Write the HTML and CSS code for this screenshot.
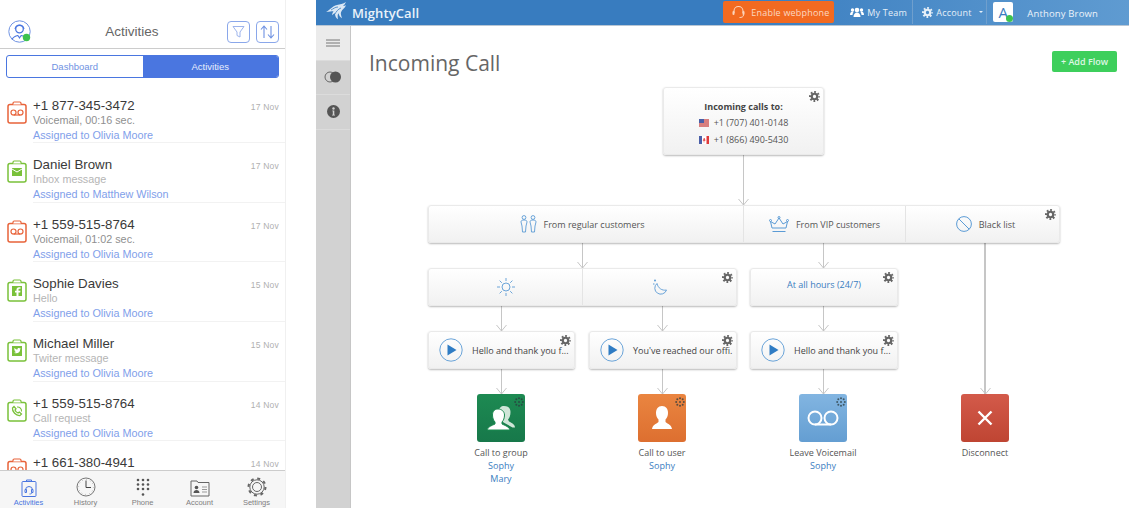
FILE: index.html
```html
<!DOCTYPE html>
<html lang="en">
<head>
<meta charset="utf-8">
<title>Incoming Call</title>
<link rel="stylesheet" href="styles.css">
</head>
<body>
<svg class="defs" aria-hidden="true">
  <defs>
    <symbol id="gear" viewBox="0 0 12 12">
      <circle cx="6" cy="6" r="3" fill="none" stroke="currentColor" stroke-width="2.4"/>
      <circle cx="6" cy="6" r="4.9" fill="none" stroke="currentColor" stroke-width="2.2" stroke-dasharray="1.95 1.9" stroke-dashoffset=".97"/>
    </symbol>
    <symbol id="clip" viewBox="0 0 20 23">
      <rect x="1" y="3.5" width="18" height="18.5" rx="2" fill="none" stroke="currentColor" stroke-width="1.5"/>
      <path d="M6 3.5V2.2C6 1.5 6.5 1 7.2 1h5.6c.7 0 1.2.5 1.2 1.2v1.3" fill="#fff" stroke="currentColor" stroke-width="1.2"/>
    </symbol>
    <symbol id="vm" viewBox="0 0 20 10">
      <circle cx="5" cy="5" r="3.6" fill="none" stroke="currentColor" stroke-width="1.7"/>
      <circle cx="15" cy="5" r="3.6" fill="none" stroke="currentColor" stroke-width="1.7"/>
      <path d="M5 8.6h10" stroke="currentColor" stroke-width="1.7"/>
    </symbol>
    <symbol id="play" viewBox="0 0 24 24">
      <circle cx="12" cy="12" r="11.2" fill="none" stroke="#5b9bd5" stroke-width=".9"/>
      <path d="M8.5 6.5 17.5 12l-9 5.500z" fill="#2f7cc4"/>
    </symbol>
    <symbol id="dots" viewBox="0 0 10 10">
      <g fill="currentColor">
        <circle cx="5" cy="1.200" r="1"/><circle cx="5" cy="8.800" r="1"/><circle cx="1.200" cy="5" r="1"/><circle cx="8.800" cy="5" r="1"/>
        <circle cx="2.300" cy="2.300" r="1"/><circle cx="7.700" cy="2.300" r="1"/><circle cx="2.300" cy="7.700" r="1"/><circle cx="7.700" cy="7.700" r="1"/><circle cx="5" cy="5" r="1"/>
      </g>
    </symbol>
  </defs>
</svg>

<section class="phone">
  <header class="ph-head">
    <svg class="agent" width="24" height="24" viewBox="0 0 24 24">
      <circle cx="11.500" cy="11.500" r="10.700" fill="#fff" stroke="#6f92e2" stroke-width="1"/>
      <circle cx="11.500" cy="9" r="3.800" fill="none" stroke="#4a76e0" stroke-width="1.300"/>
      <path d="M7 9a4.600 4.600 0 0 1 9 0M10 15.500c-3 .5-5 2-6 4M13 15.500c3 .5 5 2 6 4M10 15.500l1.500 2.500 1.500-2.500" fill="none" stroke="#4a76e0" stroke-width="1.100"/>
      <circle cx="18.500" cy="17.500" r="3.700" fill="#3dc24f"/>
    </svg>
    <h1 class="ph-title">Activities</h1>
    <div class="ph-actions">
      <span class="ph-btn"><svg width="13" height="14" viewBox="0 0 13 14"><path d="M1 1.500h11L8 7v5l-3-1.500V7z" fill="none" stroke="#9db4ec" stroke-width="1"/></svg></span>
      <span class="ph-btn"><svg width="15" height="14" viewBox="0 0 15 14"><path d="M4 13V1M1 4.500 4 1l3 3.500M11 1v12M8 9.500 11 13l3-3.500" fill="none" stroke="#6f92e2" stroke-width="1.100"/></svg></span>
    </div>
  </header>
  <div class="seg">
    <span class="seg-item">Dashboard</span>
    <span class="seg-item seg-on">Activities</span>
  </div>
  <ul class="list">
    <li class="row">
      <span class="ri red"><svg class="ri-clip"><use href="#clip"/></svg><svg class="ri-in ri-vm"><use href="#vm"/></svg></span>
      <div class="rb"><div class="rh"><span class="name">+1 877-345-3472</span><span class="date">17 Nov</span></div><div class="sub">Voicemail, 00:16 sec.</div><div class="asg">Assigned to Olivia Moore</div></div>
    </li>
    <li class="row">
      <span class="ri green"><svg class="ri-clip"><use href="#clip"/></svg><svg class="ri-in" viewBox="0 0 12 12"><path d="M1 2h10v8H1z" fill="currentColor"/><path d="M1 3l5 3 5-3" fill="none" stroke="#fff" stroke-width="1"/></svg></span>
      <div class="rb"><div class="rh"><span class="name">Daniel Brown</span><span class="date">17 Nov</span></div><div class="sub sub-l">Inbox message</div><div class="asg">Assigned to Matthew Wilson</div></div>
    </li>
    <li class="row">
      <span class="ri red"><svg class="ri-clip"><use href="#clip"/></svg><svg class="ri-in ri-vm"><use href="#vm"/></svg></span>
      <div class="rb"><div class="rh"><span class="name">+1 559-515-8764</span><span class="date">17 Nov</span></div><div class="sub">Voicemail, 01:02 sec.</div><div class="asg">Assigned to Olivia Moore</div></div>
    </li>
    <li class="row">
      <span class="ri green"><svg class="ri-clip"><use href="#clip"/></svg><svg class="ri-in" viewBox="0 0 12 12"><path d="M1 1h10v10H7.500V7.500h1.700L9.500 5.700H7.500V4.700c0-.6.200-.9.900-.9h1.100V2.200H8c-1.700 0-2.500 1-2.500 2.400v1.100H4v1.800h1.500V11H1z" fill="currentColor"/></svg></span>
      <div class="rb"><div class="rh"><span class="name">Sophie Davies</span><span class="date">15 Nov</span></div><div class="sub sub-l">Hello</div><div class="asg">Assigned to Olivia Moore</div></div>
    </li>
    <li class="row">
      <span class="ri green"><svg class="ri-clip"><use href="#clip"/></svg><svg class="ri-in" viewBox="0 0 12 12"><path d="M1 1h10v10H1z" fill="currentColor"/><path d="M9.800 3.500c-.4.200-.7.300-1 .3.400-.2.600-.5.700-.9-.3.200-.7.300-1 .4-.7-.8-2.300-.3-2 1.100-1.300 0-2.400-.7-3-1.500-.4.700-.2 1.500.4 1.900-.3 0-.5-.1-.7-.2 0 .8.500 1.300 1.200 1.500-.2.100-.4.100-.7 0 .2.600.7 1 1.400 1-.6.500-1.400.7-2.200.6 2.900 1.700 6.400 0 6.300-3.500.2-.1.500-.4.600-.7z" fill="#fff"/></svg></span>
      <div class="rb"><div class="rh"><span class="name">Michael Miller</span><span class="date">15 Nov</span></div><div class="sub sub-l">Twiter message</div><div class="asg">Assigned to Olivia Moore</div></div>
    </li>
    <li class="row">
      <span class="ri green"><svg class="ri-clip"><use href="#clip"/></svg><svg class="ri-in" viewBox="0 0 12 12"><path d="M3 1.500 1.500 3c-.5 3.500 3.500 8 7.500 7.500l1.500-1.500-2.200-2-1.300 1C5.500 7.500 4.500 6.300 4 5l1-1.300z" fill="none" stroke="currentColor" stroke-width="1.300"/><path d="M6 2a4 4 0 0 1 4.500 4.500" fill="none" stroke="currentColor" stroke-width="1.100"/></svg></span>
      <div class="rb"><div class="rh"><span class="name">+1 559-515-8764</span><span class="date">14 Nov</span></div><div class="sub sub-l">Call request</div><div class="asg">Assigned to Olivia Moore</div></div>
    </li>
    <li class="row">
      <span class="ri red"><svg class="ri-clip"><use href="#clip"/></svg><svg class="ri-in ri-vm"><use href="#vm"/></svg></span>
      <div class="rb"><div class="rh"><span class="name">+1 661-380-4941</span><span class="date">14 Nov</span></div><div class="sub">Voicemail, 00:21 sec.</div><div class="asg">Assigned to Olivia Moore</div></div>
    </li>
  </ul>
  <nav class="tabs">
    <a class="tab tab-on"><svg width="18" height="18" viewBox="0 0 18 18"><rect x="2" y="2.500" width="14" height="15" rx="1" fill="none" stroke="currentColor"/><path d="M6.500 2.500V1h5v1.500" fill="none" stroke="currentColor"/><path d="M5.500 11a3.500 3.500 0 0 1 7 0M5 10.500v3h1.500v-3zM11.500 10.500v3H13v-3zM12 13.500c0 1-1 1.500-2.500 1.500" fill="none" stroke="currentColor"/></svg><span>Activities</span></a>
    <a class="tab"><svg width="20" height="20" viewBox="0 0 20 20"><circle cx="10" cy="10" r="9" fill="none" stroke="#666" stroke-width=".9"/><circle cx="10" cy="10" r="7.400" fill="none" stroke="#999" stroke-width="1" stroke-dasharray=".6 3.270"/><path d="M10 3.500V10.500H15" fill="none" stroke="#444" stroke-width="1"/></svg><span>History</span></a>
    <a class="tab"><svg width="14" height="19" viewBox="0 0 14 19"><g fill="#555"><circle cx="2" cy="2" r="1.300"/><circle cx="7" cy="2" r="1.300"/><circle cx="12" cy="2" r="1.300"/><circle cx="2" cy="6.500" r="1.300"/><circle cx="7" cy="6.500" r="1.300"/><circle cx="12" cy="6.500" r="1.300"/><circle cx="2" cy="11" r="1.300"/><circle cx="7" cy="11" r="1.300"/><circle cx="12" cy="11" r="1.300"/><circle cx="7" cy="16.500" r="1.300"/></g></svg><span>Phone</span></a>
    <a class="tab"><svg width="20" height="17" viewBox="0 0 20 17"><path d="M1 16V1h6l1 1.500h11V16z" fill="none" stroke="#666"/><circle cx="6.500" cy="7.500" r="1.800" fill="#555"/><path d="M3.500 13c0-4 6-4 6 0z" fill="#555"/><path d="M12 7h5M12 9.500h5M12 12h5" stroke="#999"/></svg><span>Account</span></a>
    <a class="tab"><svg width="20" height="20" viewBox="0 0 20 20"><circle cx="10" cy="10" r="4.500" fill="none" stroke="#666"/><circle cx="10" cy="10" r="7.200" fill="none" stroke="#666"/><circle cx="10" cy="10" r="8.500" fill="none" stroke="#666" stroke-width="2" stroke-dasharray="3 3.670"/></svg><span>Settings</span></a>
  </nav>
</section>

<section class="app">
  <header class="top">
    <div class="brand">
      <svg class="logo" width="24" height="24" viewBox="0 0 24 24"><path d="M1 11c4-2 6-6 11-7 3-.8 6-1 9-3-1 2-2 3-3 4 1 0 2-.3 3-.8-1 3-4 4-5 7-.6 2 .5 4 1 6-2-1-3-3-3.500-5-1 1-1 3-.5 6-2-1-3-3-3-6-1 0-2 1-3 2 0-2 1-3 1.500-4-2 0-4 .5-7.500.8z" fill="#dbe8f5"/><path d="M6 9c2-1 4-3 7-3M10 13c1-2 3-5 6-6" stroke="#3a7dbf" stroke-width=".8" fill="none"/></svg>
      <span class="brand-name">MightyCall</span>
    </div>
    <div class="top-right">
      <a class="webphone"><svg width="15" height="14" viewBox="0 0 15 14"><path d="M3 8V6a4.500 4.500 0 0 1 9 0v2" fill="none" stroke="#fbd5bd" stroke-width="1.100"/><rect x="1.500" y="6" width="2" height="4" rx="1" fill="#fbd5bd"/><rect x="11.500" y="6" width="2" height="4" rx="1" fill="#fbd5bd"/><path d="M12.500 10c0 2-2 2.500-4 2.500" fill="none" stroke="#fbd5bd"/></svg>Enable webphone</a>
      <a class="top-link top-team"><svg width="14" height="11" viewBox="0 0 14 11"><g fill="#fff"><circle cx="7" cy="3" r="2.300"/><circle cx="2.500" cy="3" r="1.700"/><circle cx="11.500" cy="3" r="1.700"/><path d="M3.500 10c0-6 7-6 7 0z"/><path d="M0 8c0-3.500 3-4 3.500-3C2.800 6 2.500 7 2.500 8zM14 8c0-3.500-3-4-3.500-3 .7 1 1 2 1 3z"/></g></svg>My Team</a>
      <a class="top-link top-acc"><svg width="11" height="11"><use href="#gear"/></svg>Account<i class="caret"></i></a>
      <span class="user-ava">A<i class="user-dot"></i></span>
      <span class="user-name">Anthony Brown</span>
    </div>
  </header>
  <div class="app-body">
    <aside class="side">
      <span class="side-item side-on"><svg width="14" height="8" viewBox="0 0 14 8"><path d="M0 1h14M0 4h14M0 7h14" stroke="#777" stroke-width="1"/></svg></span>
      <span class="side-item"><svg width="18" height="12" viewBox="0 0 18 12"><circle cx="6" cy="6" r="5" fill="none" stroke="#666"/><circle cx="11.500" cy="6" r="5.500" fill="#555"/></svg></span>
      <span class="side-item"><svg width="13" height="13" viewBox="0 0 13 13"><circle cx="6.500" cy="6.500" r="6.500" fill="#555"/><circle cx="6.500" cy="3.500" r="1.200" fill="#d2d2d2"/><path d="M5.300 5.500h2v4.300h.7v.8H5v-.8h.8V6.300h-.5z" fill="#d2d2d2"/></svg></span>
    </aside>
    <main class="content">
      <div class="page-head">
        <h2 class="page-title">Incoming Call</h2>
        <a class="add-flow">+ Add Flow</a>
      </div>
      <div class="canvas">
        <svg class="wires" width="778" height="402" viewBox="0 0 778 402" aria-hidden="true">
          <g fill="none" stroke="#c6c6c6" stroke-width="1">
            <path d="M392.500 75v50M387.500 119l5 6 5-6"/>
            <path d="M231.500 163v25M226.500 182l5 6 5-6"/>
            <path d="M472.500 163v25M467.500 182l5 6 5-6"/>
            <path d="M150.500 226v25M145.500 245l5 6 5-6"/>
            <path d="M311.500 226v25M306.500 245l5 6 5-6"/>
            <path d="M472.500 226v25M467.500 245l5 6 5-6"/>
            <path d="M150.500 289v25M145.500 308l5 6 5-6"/>
            <path d="M311.500 289v25M306.500 308l5 6 5-6"/>
            <path d="M472.500 289v25M467.500 308l5 6 5-6"/>
            <path d="M634 163v151" stroke-width="2"/>
            <path d="M629.500 308l5 6 5-6"/>
          </g>
        </svg>

        <div class="box n-in">
          <svg class="cog"><use href="#gear"/></svg>
          <div class="in-title">Incoming calls to:</div>
          <div class="in-num"><svg class="flag" viewBox="0 0 10 8"><path d="M0 0h10v8H0z" fill="#e8b4b4"/><path d="M0 1h10M0 3h10M0 5h10M0 7h10" stroke="#c84a4a"/><path d="M0 0h5v4H0z" fill="#4a5fa8"/></svg>+1 (707) 401-0148</div>
          <div class="in-num"><svg class="flag" viewBox="0 0 10 8"><path d="M0 0h10v8H0z" fill="#fff"/><path d="M0 0h3v8H0z" fill="#4a5fa8"/><path d="M7.500 0H10v8H7.500z" fill="#e03a3a"/><path d="M5.200 2 4.200 4.500h2zM5 4v2.500" fill="#e03a3a" stroke="#e03a3a" stroke-width=".5"/></svg>+1 (866) 490-5430</div>
        </div>

        <div class="box n-cust">
          <svg class="cog"><use href="#gear"/></svg>
          <div class="cell cell-a">
            <svg width="17" height="18" viewBox="0 0 17 18"><g fill="none" stroke="#5b9bd5" stroke-width=".9"><circle cx="4" cy="2.500" r="1.900"/><circle cx="13" cy="2.500" r="1.900"/><path d="M1 7c0-1.500 1-2 3-2s3 .5 3 2l-1 4-.5 6h-3L2 11zM10 7c0-1.500 1-2 3-2s3 .5 3 2l-1 4-.5 6h-3L11 11z"/></g></svg>
            <span>From regular customers</span>
          </div>
          <div class="cell">
            <svg width="20" height="17" viewBox="0 0 20 17"><g fill="none" stroke="#5b9bd5" stroke-width="1"><path d="M3 12 1.500 5.500 6 8l4-6 4 6 4.500-2.500L17 12zM3.500 15.500h13"/><circle cx="1.500" cy="4.500" r="1"/><circle cx="10" cy="1.500" r="1"/><circle cx="18.500" cy="4.500" r="1"/></g></svg>
            <span>From VIP customers</span>
          </div>
          <div class="cell cell-c">
            <svg width="16" height="16" viewBox="0 0 16 16"><g fill="none" stroke="#5b9bd5" stroke-width="1"><circle cx="8" cy="8" r="7.400"/><path d="M2.800 2.800l10.400 10.400"/></g></svg>
            <span>Black list</span>
          </div>
        </div>

        <div class="box n-time">
          <svg class="cog"><use href="#gear"/></svg>
          <div class="cell cell-b">
            <svg width="18" height="18" viewBox="0 0 18 18"><g fill="none" stroke="#5b9bd5" stroke-width=".9"><circle cx="9" cy="9" r="4"/><path d="M9 0v3M9 15v3M0 9h3M15 9h3M2.600 2.600l2.200 2.200M13.200 13.200l2.200 2.200M2.600 15.400l2.200-2.200M13.200 4.800l2.200-2.200"/></g></svg>
          </div>
          <div class="cell">
            <svg width="16" height="16" viewBox="0 0 16 16"><path d="M5 4.500a6 6 0 1 0 9.500 6.500C10 12 6 9 5 4.500z" fill="none" stroke="#5b9bd5" stroke-width=".9"/><circle cx="3" cy="1.500" r="1" fill="#5b9bd5"/><path d="M1 5h1.500" stroke="#5b9bd5"/></svg>
          </div>
        </div>

        <div class="box n-hours">
          <svg class="cog"><use href="#gear"/></svg>
          <div class="cell cell-up"><span class="hours">At all hours (24/7)</span></div>
        </div>

        <div class="box msg n-m1"><svg class="cog"><use href="#gear"/></svg><svg class="pl"><use href="#play"/></svg><span>Hello and thank you f...</span></div>
        <div class="box msg n-m2"><svg class="cog"><use href="#gear"/></svg><svg class="pl"><use href="#play"/></svg><span>You've reached our offi.</span></div>
        <div class="box msg n-m3"><svg class="cog"><use href="#gear"/></svg><svg class="pl"><use href="#play"/></svg><span>Hello and thank you f...</span></div>

        <div class="act n-a1">
          <div class="tile t-green"><svg class="tdots"><use href="#dots"/></svg>
            <svg width="28" height="26" viewBox="0 0 28 26"><path d="M17 1c-3 0-5 2-5 5 0 3 1 5 2.500 6.500 0 3 .5 4 3 5.500l8 4.500H28c0-3-3-4.500-6-6l-1-2c1.500-1.500 2.500-4 2.500-7.500C23.500 3 21 1 17 1z" fill="#cfe6d8"/><path d="M11 4C7.500 4 5.500 6.500 5.500 10c0 3 1 5.500 2.500 7v2c-3 1.500-7 2.500-8 6h23c-.5-3-5-4.500-8-6v-2c1.500-1.500 2.500-4 2.500-7C17.500 6.500 14.500 4 11 4z" fill="#fff" stroke="#1b8a50" stroke-width="1"/></svg>
          </div>
          <div class="act-l">Call to group</div><div class="act-u">Sophy</div><div class="act-u">Mary</div>
        </div>
        <div class="act n-a2">
          <div class="tile t-orange"><svg class="tdots"><use href="#dots"/></svg>
            <svg width="20" height="24" viewBox="0 0 20 24"><path d="M10 0C6 0 4 3 4 7c0 3 1 5 2.500 6.500V16C4 18 .5 19 0 23h20c-.5-4-4-5-6.500-7v-2.500C15 12 16 10 16 7c0-4-2-7-6-7z" fill="#fff"/></svg>
          </div>
          <div class="act-l">Call to user</div><div class="act-u">Sophy</div>
        </div>
        <div class="act n-a3">
          <div class="tile t-blue"><svg class="tdots"><use href="#dots"/></svg>
            <svg width="32" height="16" viewBox="0 0 32 16"><g fill="none" stroke="#fff" stroke-width="2"><circle cx="8" cy="8" r="6.500"/><circle cx="24" cy="8" r="6.500"/><path d="M8 14.500h16"/></g></svg>
          </div>
          <div class="act-l">Leave Voicemail</div><div class="act-u">Sophy</div>
        </div>
        <div class="act n-a4">
          <div class="tile t-red">
            <svg width="16" height="16" viewBox="0 0 16 16"><path d="M1.500 1.500l13 13M14.500 1.500l-13 13" stroke="#fff" stroke-width="2.400"/></svg>
          </div>
          <div class="act-l">Disconnect</div>
        </div>
      </div>
    </main>
  </div>
</section>
</body>
</html>
```
FILE: styles.css
```css
* { box-sizing: border-box; }
html, body { margin: 0; padding: 0; height: 100%; }
body {
  display: flex;
  width: 1129px;
  height: 508px;
  overflow: hidden;
  background: #fff;
  font-family: "Open Sans", "Liberation Sans", sans-serif;
}
.defs { position: absolute; width: 0; height: 0; }
a { text-decoration: none; color: inherit; }

/* phone panel */
.phone {
  position: relative;
  width: 286px;
  height: 508px;
  margin-right: 30px;
  border-right: 1px solid #f0f0f0;
  overflow: hidden;
  display: flex;
  flex-direction: column;
  font-family: "Liberation Sans", Arial, sans-serif;
}
.ph-head {
  flex: none;
  height: 49px;
  padding: 20px 6px 0 8px;
  border-bottom: 1px solid #ccc;
  display: flex;
  justify-content: space-between;
  align-items: flex-start;
}
.agent { margin-top: 0; }
.ph-title {
  margin: 4px 0 0 5px;
  width: 160px;
  text-align: center;
  font-size: 13.500px;
  line-height: 16px;
  font-weight: 400;
  color: #666;
}
.ph-actions { display: flex; gap: 6px; }
.ph-btn {
  width: 23px;
  height: 22px;
  margin-top: 1px;
  border: 1px solid #8aa7ea;
  border-radius: 4px;
  display: flex;
  align-items: center;
  justify-content: center;
}
.seg {
  flex: none;
  margin: 6px 6px 0;
  height: 23px;
  display: flex;
  border: 1px solid #4a76e0;
  border-radius: 3px;
  overflow: hidden;
  font-size: 9.500px;
}
.seg-item {
  flex: 1;
  display: flex;
  align-items: center;
  justify-content: center;
  color: #6f92e2;
}
.seg-on { background: #4a76e0; color: #e8eefc; }
.list { list-style: none; margin: 5.500px 0 0; padding: 0; flex: 1; overflow: hidden; }
.row { display: flex; height: 59.670px; }
.ri {
  position: relative;
  flex: none;
  width: 33px;
  display: block;
}
.red { color: #e8633a; }
.green { color: #7ac13a; }
.ri-clip { position: absolute; left: 7px; top: 17px; width: 20px; height: 23px; }
.ri-in { position: absolute; left: 11px; top: 23px; width: 12px; height: 12px; }
.ri-vm { left: 10px; top: 25px; width: 14px; height: 7px; }
.rb {
  flex: 1;
  min-width: 0;
  padding: 14px 6px 0 0;
  border-bottom: 1px solid #f2f2f2;
}
.rh { display: flex; justify-content: space-between; align-items: baseline; }
.name { font-size: 13.300px; line-height: 15px; color: #3a3a3a; }
.date { font-size: 8.500px; color: #b0b0b0; letter-spacing: .2px; }
.sub { font-size: 10.800px; line-height: 15px; color: #8f8f8f; }
.sub-l { color: #b5b5b5; }
.asg { font-size: 10.800px; line-height: 14.500px; color: #7fa0ea; }
.tabs {
  position: absolute;
  left: 0;
  right: 0;
  bottom: 0;
  height: 38px;
  background: #f6f6f6;
  border-top: 1px solid #ccc;
  display: grid;
  grid-template-columns: repeat(5, 1fr);
}
.tab {
  display: flex;
  flex-direction: column;
  align-items: center;
  justify-content: flex-end;
  padding-bottom: 0;
  font-size: 7.500px;
  line-height: 10px;
  color: #808080;
  gap: 1px;
}
.tab-on { color: #4a76e0; }

/* web app */
.app { flex: 1; min-width: 0; display: flex; flex-direction: column; }
.top {
  flex: none;
  height: 26px;
  background: linear-gradient(90deg, #387cbf 0%, #387cbf 50%, #5f9bd1 100%);
  border-bottom: 1px solid #b8c6d4;
  display: flex;
  justify-content: space-between;
  color: #e6eff8;
}
.brand { display: flex; align-items: center; padding-left: 9px; gap: 3px; }
.brand-name { font-size: 13px; font-weight: 600; color: #eaf2fa; letter-spacing: .1px; }
.top-right { display: flex; align-items: stretch; font-size: 9px; }
.webphone {
  width: 111px;
  height: 22px;
  margin-top: 1px;
  background: #f26a21;
  border-radius: 2px;
  display: flex;
  align-items: center;
  padding-left: 8px;
  gap: 5px;
  color: #fbd9c4;
  font-size: 9px;
  letter-spacing: .2px;
}
.top-link {
  display: flex;
  align-items: center;
  gap: 3px;
  height: 24px;
  font-size: 9px;
  letter-spacing: .2px;
  border-right: 1px solid #6f9fcd;
}
.top-team { margin-left: 16px; width: 63px; }
.top-acc { padding-left: 9px; width: 74px; }
.caret {
  margin-left: 4px;
  border: 2.500px solid transparent;
  border-top-color: #e6eff8;
  border-bottom: 0;
}
.user-ava {
  position: relative;
  width: 20px;
  height: 20px;
  margin: 2px 0 0 6px;
  background: #fff;
  border-radius: 2px;
  color: #3a7dbf;
  font-size: 15px;
  line-height: 20px;
  text-align: center;
}
.user-dot {
  position: absolute;
  right: 0;
  bottom: 0;
  width: 7px;
  height: 7px;
  border-radius: 50%;
  background: #3dc24f;
}
.user-name {
  margin: 7px 31px 0 14px;
  font-size: 9.500px;
  line-height: 13px;
  letter-spacing: .15px;
  color: #edf3fa;
  white-space: nowrap;
}
.app-body { flex: 1; display: flex; min-height: 0; }
.side {
  flex: none;
  width: 35px;
  background: #d2d2d2;
  border-right: 1px solid #c6c6c6;
  display: flex;
  flex-direction: column;
}
.side-item {
  height: 34.500px;
  display: flex;
  align-items: center;
  justify-content: center;
  border-bottom: 1px solid #dcdcdc;
}
.side-on { background: #ebebeb; }
.content { flex: 1; min-width: 0; display: flex; flex-direction: column; }
.page-head {
  flex: none;
  height: 54px;
  padding: 25px 12px 0 18px;
  display: flex;
  justify-content: space-between;
  align-items: flex-start;
}
.page-title {
  margin: 0;
  font-size: 21px;
  line-height: 25px;
  font-weight: 400;
  color: #666;
}
.add-flow {
  width: 65px;
  height: 21px;
  background: #3ecf5c;
  border-radius: 2px;
  color: #dff7e4;
  font-size: 9px;
  font-weight: 600;
  display: flex;
  align-items: center;
  justify-content: center;
}
.canvas { position: relative; flex: 1; }
.wires { position: absolute; left: 0; top: 0; }
.box {
  position: absolute;
  background: linear-gradient(180deg, #fff 0%, #f1f1f1 100%);
  border: 1px solid #eaeaea;
  border-radius: 3px;
  box-shadow: 0 1px 2px rgba(0, 0, 0, .28);
  display: flex;
  font-size: 9px;
  color: #555;
}
.cog {
  position: absolute;
  right: 3px;
  top: 3px;
  width: 11px;
  height: 11px;
  color: #666;
}
.n-in {
  left: 312px;
  top: 7px;
  width: 161px;
  height: 68px;
  flex-direction: column;
  align-items: center;
  padding-top: 11px;
}
.in-title { font-weight: 700; color: #444; line-height: 15px; }
.in-num { display: flex; align-items: center; line-height: 17px; gap: 5px; color: #555; }
.flag { width: 10px; height: 8px; }
.n-cust { left: 77px; top: 125px; width: 632px; height: 38px; }
.n-time { left: 77px; top: 188px; width: 309px; height: 38px; }
.n-hours { left: 399px; top: 188px; width: 148px; height: 38px; }
.cell {
  flex: 1;
  display: flex;
  align-items: center;
  justify-content: center;
  gap: 7px;
  border-right: 1px solid #e4e4e4;
}
.cell:last-child { border-right: 0; }
.cell-a { flex: none; width: 315px; padding-right: 8px; }
.n-cust .cell:nth-of-type(2) { flex: none; width: 162px; }
.n-cust .cell-c { flex: 1; padding-left: 6px; }
.cell-b { flex: none; width: 154px; }
.cell-up { padding-bottom: 6px; }
.hours { color: #3a7dbf; }
.msg { top: 251px; height: 38px; align-items: center; padding-left: 10px; gap: 9px; white-space: nowrap; color: #444; }
.pl { width: 24px; height: 24px; flex: none; }
.n-m1 { left: 77px; width: 147px; }
.n-m2 { left: 238px; width: 148px; }
.n-m3 { left: 399px; width: 148px; }
.act {
  position: absolute;
  top: 314px;
  width: 120px;
  display: flex;
  flex-direction: column;
  align-items: center;
  font-size: 9px;
  line-height: 13px;
}
.n-a1 { left: 90px; }
.n-a2 { left: 251px; }
.n-a3 { left: 412px; }
.n-a4 { left: 574px; }
.tile {
  position: relative;
  width: 48px;
  height: 48px;
  margin-bottom: 4px;
  border-radius: 3px;
  display: flex;
  align-items: center;
  justify-content: center;
}
.t-green { background: linear-gradient(180deg, #1d8a52, #17784a); }
.t-orange { background: linear-gradient(180deg, #ea8540, #dd6f30); }
.t-blue { background: linear-gradient(180deg, #82b5e1, #649ed2); }
.t-red { background: linear-gradient(180deg, #d35a4a, #bf4533); }
.tdots { position: absolute; right: 1px; top: 3px; width: 10px; height: 10px; color: #2b3b3f; opacity: .75; }
.act-l { color: #555; }
.act-u { color: #3a7dbf; }
```
